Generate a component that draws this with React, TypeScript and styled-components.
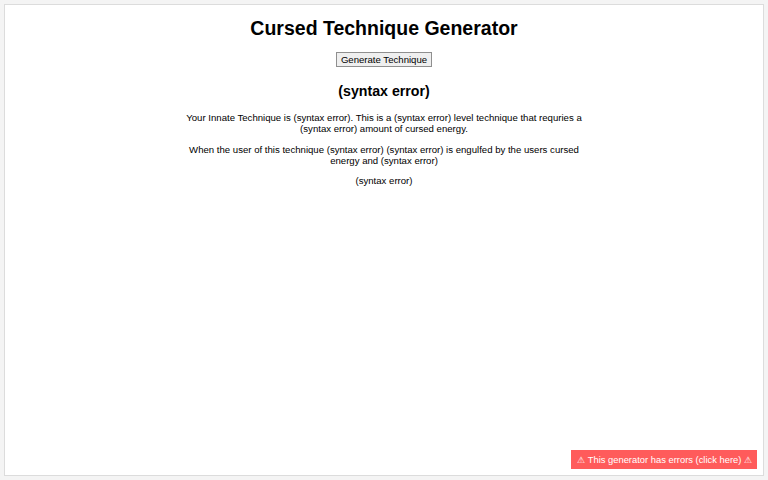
import React from 'react'
import styled, { createGlobalStyle } from 'styled-components'

const GlobalStyle = createGlobalStyle`
  html, body {
    margin: 0;
    padding: 0;
    background: #f4f4f4;
    font-family: 'Liberation Sans', Arial, sans-serif;
    color: #000;
  }
`

const Page = styled.div`
  box-sizing: border-box;
  height: 480px;
  padding: 4px;
  display: flex;
`

const Panel = styled.main`
  flex: 1;
  background: #fff;
  border: 1px solid #dcdcdc;
  display: flex;
  flex-direction: column;
  align-items: center;
  padding-top: 11px;
`

const Title = styled.h1`
  margin: 0;
  font-size: 19.5px;
  font-weight: bold;
  line-height: 24px;
`

const GenerateButton = styled.button`
  margin-top: 12px;
  font-family: 'Liberation Sans', Arial, sans-serif;
  font-size: 9.6px;
  padding: 1px 4px;
  background: #efefef;
  border: 1px solid #8f8f8f;
  border-radius: 0;
  color: #000;
  line-height: 11px;
`

const Heading = styled.h2`
  margin: 15px 0 0;
  font-size: 14.2px;
  font-weight: bold;
  line-height: 18px;
`

const Body = styled.div`
  width: 400px;
  margin-top: 12px;
  display: flex;
  flex-direction: column;
  gap: 10px;
`

const Para = styled.p<{ $tight?: boolean }>`
  margin: ${(p) => (p.$tight ? '-1px 0 0' : '0')};
  text-align: center;
  font-size: 9.6px;
  line-height: 11px;
`

const ErrorBadge = styled.button`
  position: fixed;
  right: 11px;
  bottom: 11px;
  height: 19px;
  padding: 0 5px 0 6px;
  background: #ff5b5b;
  color: #fff;
  border: none;
  font-family: 'Liberation Sans', Arial, sans-serif;
  font-size: 9.4px;
  cursor: pointer;
`

export default function App() {
  return (
    <>
      <GlobalStyle />
      <Page>
        <Panel>
          <Title>Cursed Technique Generator</Title>
          <GenerateButton>Generate Technique</GenerateButton>
          <Heading>(syntax error)</Heading>
          <Body>
            <Para>
              Your Innate Technique is (syntax error). This is a (syntax error) level technique
              that requries a (syntax error) amount of cursed energy.
            </Para>
            <Para>
              When the user of this technique (syntax error) (syntax error) is engulfed by the
              users cursed energy and (syntax error)
            </Para>
            <Para $tight>(syntax error)</Para>
          </Body>
        </Panel>
      </Page>
      <ErrorBadge>⚠ This generator has errors (click here) ⚠</ErrorBadge>
    </>
  )
}
